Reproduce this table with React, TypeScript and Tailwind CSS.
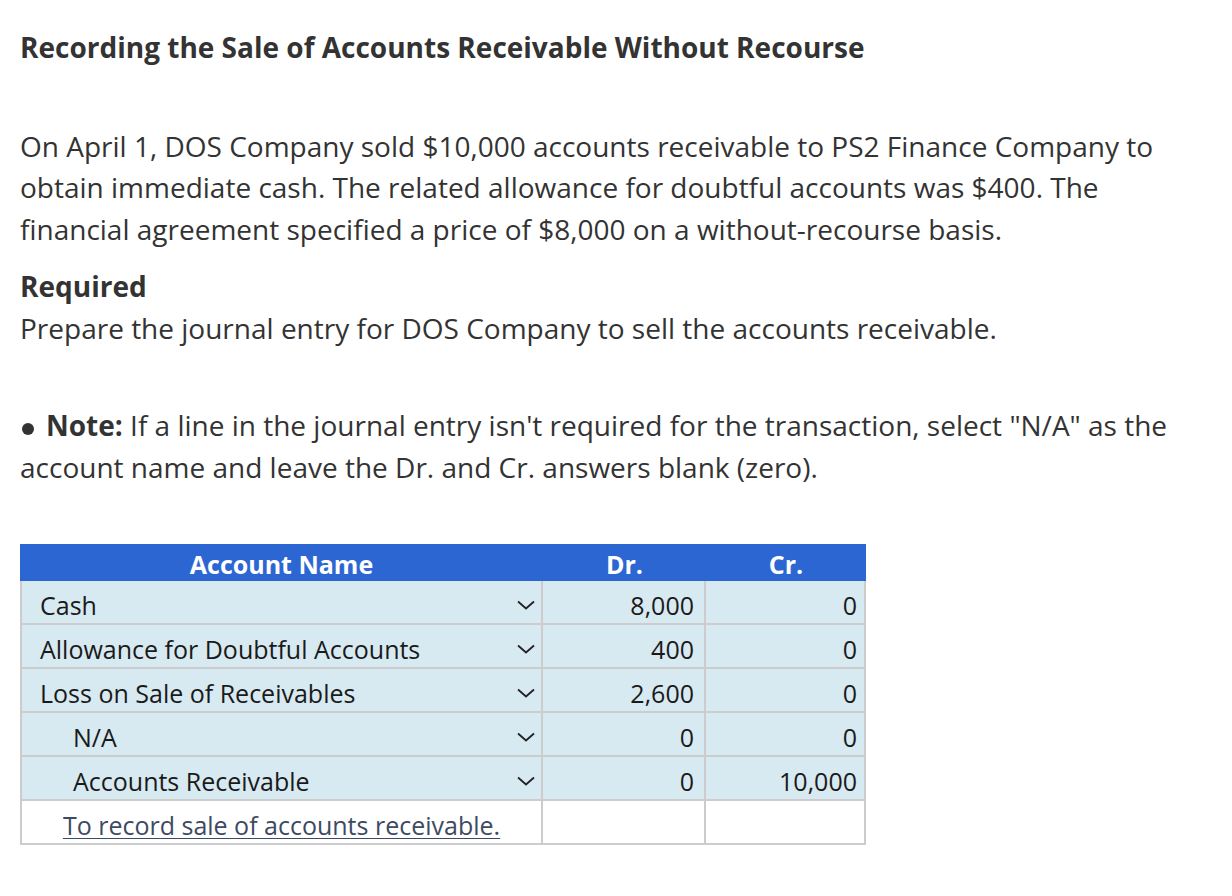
import React from "react";

const rows = [
  { name: "Cash", indent: false, dr: "8,000", cr: "0" },
  { name: "Allowance for Doubtful Accounts", indent: false, dr: "400", cr: "0" },
  { name: "Loss on Sale of Receivables", indent: false, dr: "2,600", cr: "0" },
  { name: "N/A", indent: true, dr: "0", cr: "0" },
  { name: "Accounts Receivable", indent: true, dr: "0", cr: "10,000" },
];

function Chevron() {
  return (
    <svg width="18" height="10" viewBox="0 0 18 10" className="shrink-0">
      <path d="M1 1.5 L9 8.5 L17 1.5" fill="none" stroke="#222" strokeWidth="1.8" />
    </svg>
  );
}

export default function App() {
  return (
    <div
      className="bg-white min-h-[896px] w-[1232px] px-[20px] pt-[27px] text-[#333] text-[28px] leading-[41.5px]"
      style={{ fontFamily: '"Open Sans", "Noto Sans", sans-serif' }}
    >
      <div className="w-[1180px]">
        <div className="font-bold text-[#333] text-[28px] leading-[41.5px]">
          Recording the Sale of Accounts Receivable Without Recourse
        </div>
        <p className="mt-[57px]">
          On April 1, DOS Company sold $10,000 accounts receivable to PS2 Finance Company to obtain immediate cash. The
          related allowance for doubtful accounts was $400. The financial agreement specified a price of $8,000 on a
          without-recourse basis.
        </p>
        <div className="mt-[16px] font-bold">Required</div>
        <div>Prepare the journal entry for DOS Company to sell the accounts receivable.</div>
        <p className="mt-[56px]">
          <span className="inline-block w-[12px] h-[12px] rounded-full bg-[#333] ml-[2px] mr-[12px] align-[1px]" />
          <span className="font-bold">Note:</span> If a line in the journal entry isn't required for the transaction,
          select "N/A" as the account name and leave the Dr. and Cr. answers blank (zero).
        </p>
      </div>

      <div className="mt-[56px] w-[846px] text-[25px] leading-[30px] text-[#1a1a1a]">
        <div className="flex h-[37px] bg-[#2c66d2] text-white font-bold items-center pt-[2px]">
          <div className="w-[523px] text-center">Account Name</div>
          <div className="w-[163px] text-center">Dr.</div>
          <div className="w-[160px] text-center">Cr.</div>
        </div>
        {rows.map((r) => (
          <div key={r.name} className="flex h-[44px] bg-[#d7e9f1] border-b-2 border-[#cccccc]">
            <div
              className={`w-[523px] flex items-center border-l-2 border-r-2 border-[#cccccc] pr-[6px] ${
                r.indent ? "pl-[51px]" : "pl-[18px]"
              }`}
            >
              <span className="flex-1 pt-[6px]">{r.name}</span>
              <span className="pt-[6px]">
                <Chevron />
              </span>
            </div>
            <div className="w-[163px] flex items-center justify-end pr-[10px] pt-[6px] border-r-2 border-[#cccccc]">
              {r.dr}
            </div>
            <div className="w-[160px] flex items-center justify-end pr-[7px] pt-[6px] border-r-2 border-[#cccccc]">
              {r.cr}
            </div>
          </div>
        ))}
        <div className="flex h-[44px] bg-white border-b-2 border-[#cccccc]">
          <div className="w-[523px] flex items-center justify-center border-l-2 border-r-2 border-[#cccccc] pt-[6px]">
            <span className="underline text-[#3d4a63] underline-offset-[3px] decoration-1">
              To record sale of accounts receivable.
            </span>
          </div>
          <div className="w-[163px] border-r-2 border-[#cccccc]" />
          <div className="w-[160px] border-r-2 border-[#cccccc]" />
        </div>
      </div>
    </div>
  );
}
